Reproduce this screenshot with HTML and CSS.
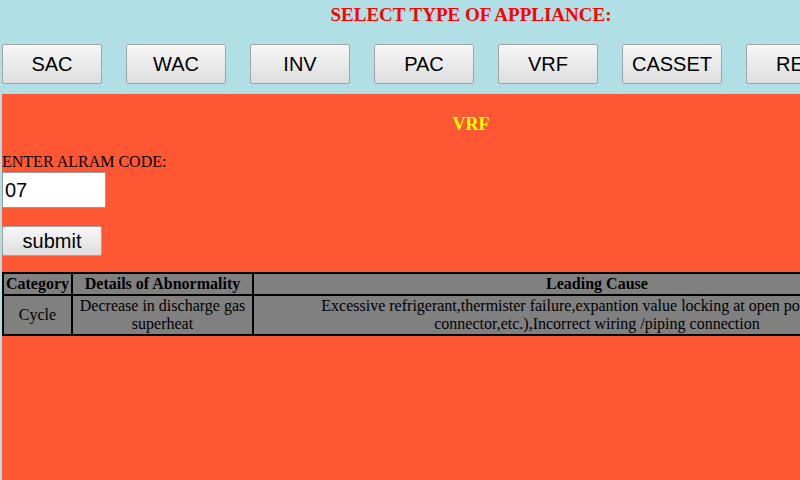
FILE: index.html
```html
<!DOCTYPE html>
<html>
<head>
<meta charset="utf-8">
<title>Alarm Codes</title>
<link rel="stylesheet" href="styles.css">
</head>
<body>
<div class="page">
  <h2 class="title">SELECT TYPE OF APPLIANCE:</h2>
  <div class="types">
    <button class="type-btn">SAC</button>
    <button class="type-btn">WAC</button>
    <button class="type-btn">INV</button>
    <button class="type-btn">PAC</button>
    <button class="type-btn">VRF</button>
    <button class="type-btn">CASSET</button>
    <button class="type-btn">REF</button>
  </div>
  <div class="panel">
    <h3 class="panel-title">VRF</h3>
    <div class="code-label">ENTER ALRAM CODE:</div>
    <input class="code-input" type="text" value="07">
    <button class="submit-btn">submit</button>
    <table class="result">
      <colgroup>
        <col class="c1"><col class="c2"><col class="c3">
      </colgroup>
      <tr>
        <th>Category</th>
        <th>Details of Abnormality</th>
        <th>Leading Cause</th>
      </tr>
      <tr>
        <td>Cycle</td>
        <td>Decrease in discharge gas superheat</td>
        <td>Excessive refrigerant,thermister failure,expantion value locking at open position (coil, connector,etc.),Incorrect wiring /piping connection</td>
      </tr>
    </table>
  </div>
</div>
</body>
</html>
```

FILE: styles.css
```css
html, body {
  margin: 0;
  padding: 0;
  overflow: hidden;
}
body {
  background: #b0e0e6;
  font-family: "Liberation Serif", "Times New Roman", serif;
  color: #000;
}
.page {
  width: 938px;
  margin-left: 2px;
}
.title {
  margin: 0;
  padding-top: 4px;
  font-size: 19px;
  line-height: 22px;
  font-weight: bold;
  color: #ff0000;
  text-align: center;
}
.types {
  display: flex;
  gap: 24px;
  margin-top: 18px;
  height: 40px;
}
.type-btn, .submit-btn {
  flex: none;
  width: 100px;
  height: 40px;
  padding: 0;
  font-family: "Liberation Sans", Arial, sans-serif;
  font-size: 20px;
  color: #000;
  background: linear-gradient(#f7f7f7, #dedede);
  border: 1px solid #a3a3a3;
  border-radius: 2px;
}
.panel {
  margin-top: 10px;
  background: #ff5733;
  min-height: 400px;
  padding-top: 20px;
  overflow: hidden;
}
.panel-title {
  margin: 0;
  font-size: 18px;
  line-height: 21px;
  font-weight: bold;
  color: #ffff00;
  text-align: center;
}
.code-label {
  margin-top: 18px;
  font-size: 16px;
  line-height: 18px;
}
.code-input {
  display: block;
  margin: 1px 0 0 0;
  box-sizing: border-box;
  width: 104px;
  height: 36px;
  padding: 0 2px;
  border: 1px solid #9a9a9a;
  background: #fff;
  font-family: "Liberation Sans", Arial, sans-serif;
  font-size: 20px;
  color: #000;
}
.submit-btn {
  display: block;
  margin-top: 18px;
  height: 30px;
}
.result {
  margin-top: 16px;
  width: 938px;
  border-collapse: collapse;
  border: 2px solid #000;
  background: #808080;
  font-size: 16px;
  table-layout: fixed;
}
.result th, .result td {
  border: 2px solid #000;
  padding: 1px;
  text-align: center;
  line-height: 18px;
  vertical-align: middle;
}
.c1 { width: 69px; }
.c2 { width: 181px; }
.c3 { width: 688px; }
```
